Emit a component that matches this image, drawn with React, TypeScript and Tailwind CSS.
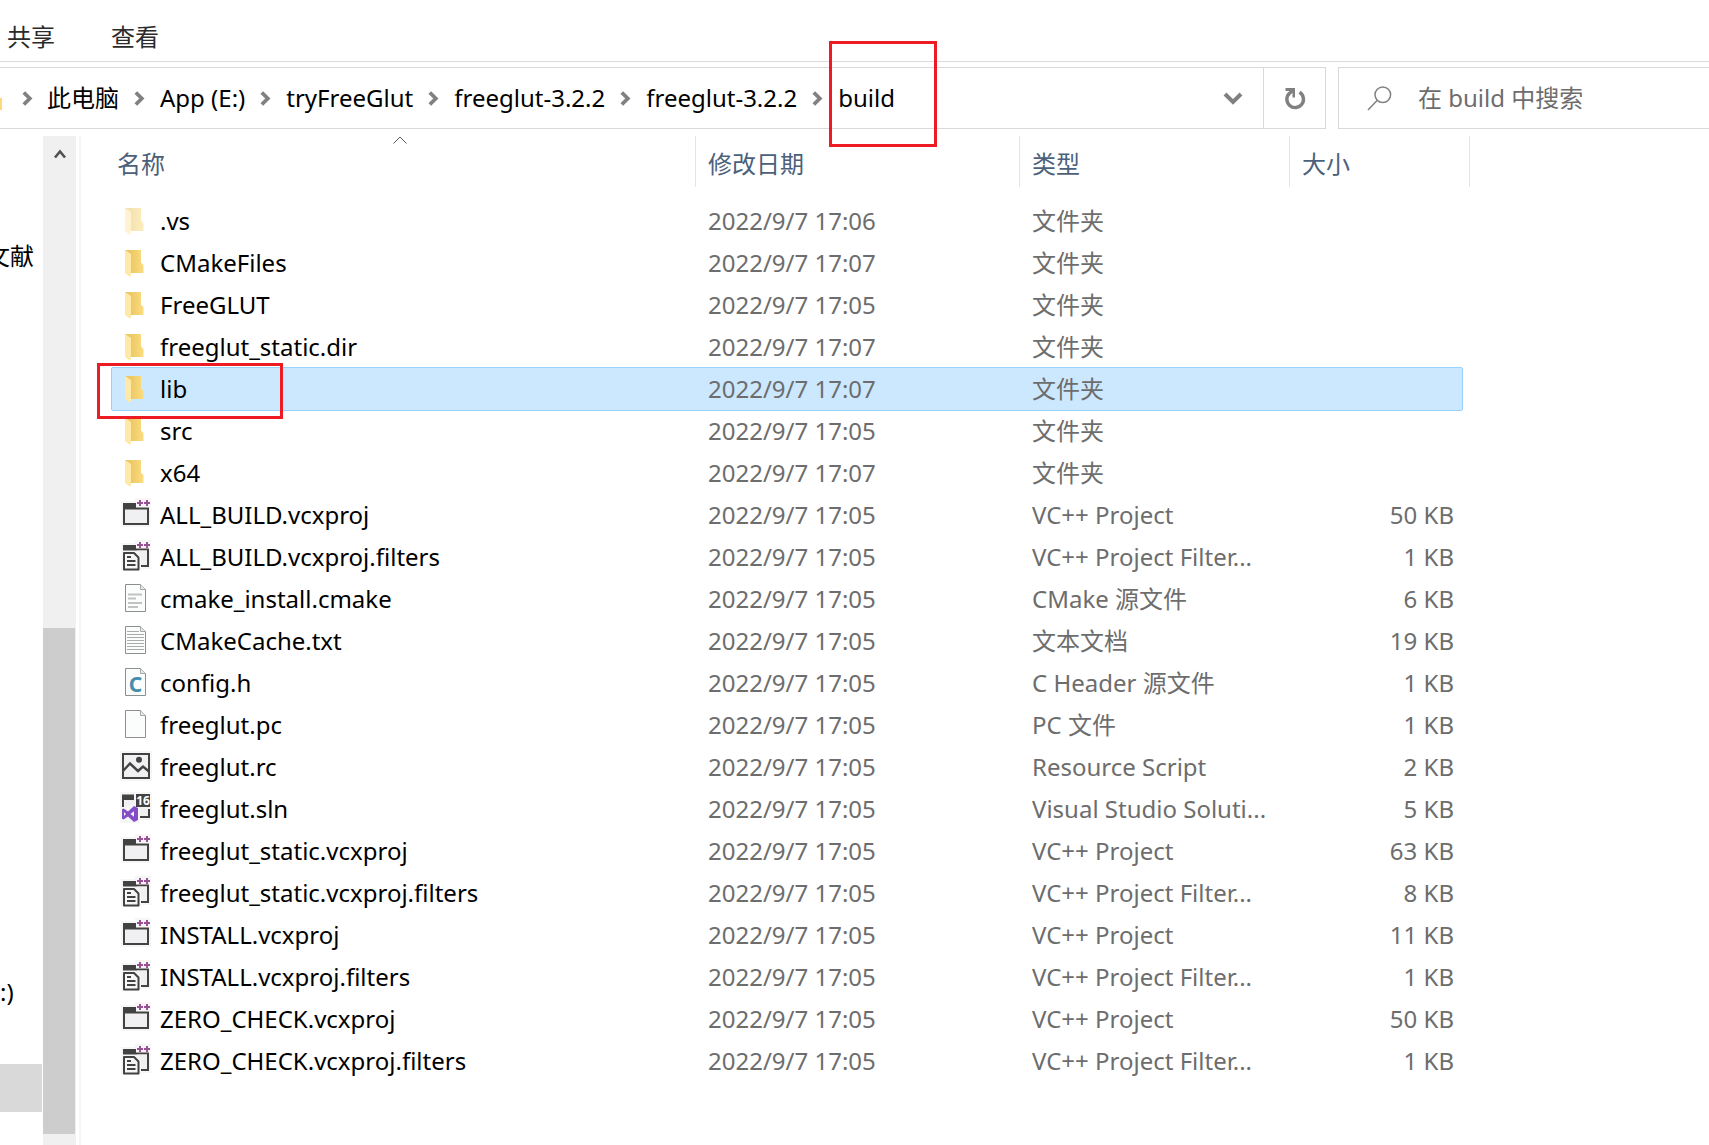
import React from "react";

type IconKind =
  | "folder"
  | "hidden"
  | "project"
  | "filters"
  | "source"
  | "text"
  | "header"
  | "blank"
  | "image"
  | "solution";

type Entry = {
  icon: IconKind;
  name: string;
  date: string;
  type: string;
  size?: string;
  selected?: boolean;
};

const entries: Entry[] = [
  { icon: "hidden", name: ".vs", date: "2022/9/7 17:06", type: "文件夹" },
  { icon: "folder", name: "CMakeFiles", date: "2022/9/7 17:07", type: "文件夹" },
  { icon: "folder", name: "FreeGLUT", date: "2022/9/7 17:05", type: "文件夹" },
  { icon: "folder", name: "freeglut_static.dir", date: "2022/9/7 17:07", type: "文件夹" },
  { icon: "folder", name: "lib", date: "2022/9/7 17:07", type: "文件夹", selected: true },
  { icon: "folder", name: "src", date: "2022/9/7 17:05", type: "文件夹" },
  { icon: "folder", name: "x64", date: "2022/9/7 17:07", type: "文件夹" },
  { icon: "project", name: "ALL_BUILD.vcxproj", date: "2022/9/7 17:05", type: "VC++ Project", size: "50 KB" },
  { icon: "filters", name: "ALL_BUILD.vcxproj.filters", date: "2022/9/7 17:05", type: "VC++ Project Filter...", size: "1 KB" },
  { icon: "source", name: "cmake_install.cmake", date: "2022/9/7 17:05", type: "CMake 源文件", size: "6 KB" },
  { icon: "text", name: "CMakeCache.txt", date: "2022/9/7 17:05", type: "文本文档", size: "19 KB" },
  { icon: "header", name: "config.h", date: "2022/9/7 17:05", type: "C Header 源文件", size: "1 KB" },
  { icon: "blank", name: "freeglut.pc", date: "2022/9/7 17:05", type: "PC 文件", size: "1 KB" },
  { icon: "image", name: "freeglut.rc", date: "2022/9/7 17:05", type: "Resource Script", size: "2 KB" },
  { icon: "solution", name: "freeglut.sln", date: "2022/9/7 17:05", type: "Visual Studio Soluti...", size: "5 KB" },
  { icon: "project", name: "freeglut_static.vcxproj", date: "2022/9/7 17:05", type: "VC++ Project", size: "63 KB" },
  { icon: "filters", name: "freeglut_static.vcxproj.filters", date: "2022/9/7 17:05", type: "VC++ Project Filter...", size: "8 KB" },
  { icon: "project", name: "INSTALL.vcxproj", date: "2022/9/7 17:05", type: "VC++ Project", size: "11 KB" },
  { icon: "filters", name: "INSTALL.vcxproj.filters", date: "2022/9/7 17:05", type: "VC++ Project Filter...", size: "1 KB" },
  { icon: "project", name: "ZERO_CHECK.vcxproj", date: "2022/9/7 17:05", type: "VC++ Project", size: "50 KB" },
  { icon: "filters", name: "ZERO_CHECK.vcxproj.filters", date: "2022/9/7 17:05", type: "VC++ Project Filter...", size: "1 KB" },
];

const crumbs = ["此电脑", "App (E:)", "tryFreeGlut", "freeglut-3.2.2", "freeglut-3.2.2", "build"];

function Folder() {
  return (
    <>
      <defs>
        <linearGradient id="folderBack" x1="0" x2="1" y1="0" y2="0">
          <stop offset="0.3" stopColor="#ecc765" />
          <stop offset="1" stopColor="#fbdd80" />
        </linearGradient>
      </defs>
      <path d="M5 5H21V17.5L23.5 20V28H5Z" fill="url(#folderBack)" />
      <path d="M5 5L11 9V29.5L10 32L5 28Z" fill="#ffe9a6" />
    </>
  );
}

function Pluses() {
  return (
    <path d="M17 6H23M20 3V9M24 6H30M27 3V9" stroke="#9b4f96" strokeWidth="2" fill="none" />
  );
}

function Page({ children }: { children?: React.ReactNode }) {
  return (
    <>
      <path d="M5.5 3.5H20.5L25.5 8.5V30.5H5.5Z" fill="#fbfcfc" stroke="#8c8f8f" />
      <path d="M20.5 3.5V8.5H25.5" fill="#e6e8e8" stroke="#a6a8a8" />
      {children}
    </>
  );
}

function FileIcon({ kind }: { kind: IconKind }) {
  return (
    <svg
      aria-hidden="true"
      viewBox="0 0 32 32"
      className={kind === "hidden" ? "mb-1 size-8 shrink-0 opacity-50" : "mb-1 size-8 shrink-0"}
    >
      {(kind === "folder" || kind === "hidden") && <Folder />}
      {kind === "project" && (
        <>
          <path d="M1 4H15V1H31V30H1Z" fill="#f6f6f6" />
          <path d="M3 6H16V10.5H29V28H3Z" fill="#424242" />
          <path d="M5 12.5H27V26H5Z" fill="#f0eff1" />
          <Pluses />
        </>
      )}
      {kind === "filters" && (
        <>
          <path d="M1 4H15V1H31V30H21V32H1Z" fill="#f6f6f6" />
          <path d="M3 6H16V9.5H29V28H21V26H27V11.5H3Z" fill="#424242" />
          <path d="M17 11.5H27V26H21V17Z" fill="#f0eff1" />
          <path d="M4 14H14L18.5 18.5V30.5H4Z" fill="#f6f6f6" stroke="#424242" strokeWidth="2" strokeLinejoin="round" />
          <path d="M7 18H11M7 22H15.5M7 26H15.5" stroke="#424242" strokeWidth="1.8" />
          <Pluses />
        </>
      )}
      {kind === "source" && (
        <Page>
          <path d="M8 13.5H22M8 17.5H16M8 22H22M8 26H18" stroke="#c2c2c2" strokeWidth="1.8" />
        </Page>
      )}
      {kind === "text" && (
        <Page>
          <path
            d="M7 8.5H19M7 11.5H24M7 14.5H24M7 17.5H24M7 20.5H24M7 23.5H24M7 26.5H24"
            stroke="#a9abab"
          />
        </Page>
      )}
      {kind === "header" && (
        <Page>
          <text x="15.5" y="27" textAnchor="middle" fontSize="21" fontWeight="700" fill="#478dab">
            C
          </text>
        </Page>
      )}
      {kind === "blank" && <Page />}
      {kind === "image" && (
        <>
          <path d="M0 2H32V32H0Z" fill="#f6f6f6" />
          <path d="M3 5H29V29H3Z" fill="#f0eff1" stroke="#424242" strokeWidth="2" />
          <circle cx="19" cy="10.7" r="3" fill="#424242" />
          <path d="M3 22L10 14.5L18 22L23 17.5L29 22.5" fill="none" stroke="#424242" strokeWidth="2.4" />
        </>
      )}
      {kind === "solution" && (
        <>
          <path d="M0 1H32V29H20V32H0Z" fill="#f6f6f6" />
          <path d="M2 3.5H14V9H4V16H2Z" fill="#424242" />
          <path d="M5 9H14V16H28V25H20V17L11 13L5 16Z" fill="#f0eff1" />
          <path d="M16 3H30V16H16Z" fill="#424242" />
          <path d="M28 18H30V27H20V25H28Z" fill="#424242" />
          <text x="23" y="14" textAnchor="middle" fontSize="12" fontWeight="700" fill="#ffffff">
            16
          </text>
          <path
            transform="translate(0.4 13.4) scale(0.8)"
            fillRule="evenodd"
            d="M17 2L22 4.5V19.5L17 22L9.5 15L4 19L2 18V6L4 5L9.5 9ZM17 8.5L12.5 12L17 15.5ZM4.5 9.5V14.5L7 12Z"
            fill="#854cc7"
          />
        </>
      )}
    </svg>
  );
}

function Crumbs() {
  return (
    <nav aria-label="地址" className="flex items-center">
      <span className="mb-1 h-3 w-[2px] self-end bg-[#ffd978]" />
      {crumbs.map((crumb, i) => (
        <React.Fragment key={i}>
          <svg
            aria-hidden="true"
            viewBox="0 0 11 15"
            className={i === 0 ? "mr-[14px] ml-5 w-[11px]" : "mx-[15px] w-[11px]"}
          >
            <path d="M1.8 1.5L7.8 7.5L1.8 13.5" fill="none" stroke="#808080" strokeWidth="3.8" />
          </svg>
          <a href="#" className="relative text-black">
            {crumb}
            {i === crumbs.length - 1 && (
              <span className="pointer-events-none absolute -top-[41px] -left-[9px] h-[106px] w-[108px] border-3 border-[#ed1c24]" />
            )}
          </a>
        </React.Fragment>
      ))}
    </nav>
  );
}

function Row({ entry }: { entry: Entry }) {
  const on = entry.selected;
  const mid = on
    ? "bg-[#cce8ff] pl-3 shadow-[0_-1px_0_#99d1ff,0_1px_0_#99d1ff]"
    : "pl-3";
  return (
    <tr className="h-[42px] text-[#6d6d6d]">
      <td />
      <td
        className={
          on
            ? "bg-[#cce8ff] pl-2 shadow-[0_-1px_0_#99d1ff,0_1px_0_#99d1ff,-1px_0_0_#99d1ff]"
            : "pl-2"
        }
      >
        <div className="relative flex items-center gap-2 text-black">
          <FileIcon kind={entry.icon} />
          <span>{entry.name}</span>
          {on && (
            <span className="pointer-events-none absolute -top-[8px] -left-[23px] z-10 h-14 w-[186px] border-3 border-[#ed1c24]" />
          )}
        </div>
      </td>
      <td className={mid}>{entry.date}</td>
      <td className={mid}>{entry.type}</td>
      <td
        className={
          on
            ? "bg-[#cce8ff] pr-2 text-right shadow-[0_-1px_0_#99d1ff,0_1px_0_#99d1ff,1px_0_0_#99d1ff]"
            : "pr-2 text-right"
        }
      >
        {entry.size}
      </td>
    </tr>
  );
}

export default function App() {
  return (
    <div className="flex min-h-screen flex-col overflow-hidden bg-white font-['Noto_Sans','Noto_Sans_CJK_SC',sans-serif] text-[24px] leading-8 whitespace-nowrap">
      <header className="flex h-[62px] items-center gap-14 border-b border-[#dadbdc] px-[7px] pt-3 text-[#2b2b2b]">
        <button type="button">共享</button>
        <button type="button">查看</button>
      </header>

      <div className="mt-[5px] mb-[7px] flex h-[62px] gap-3">
        <div className="flex min-w-0 flex-1 border-y border-r border-[#d9d9d9]">
          <div className="flex min-w-0 flex-1 items-center">
            <Crumbs />
          </div>
          <button type="button" aria-label="以前的位置" className="px-5">
            <svg aria-hidden="true" viewBox="0 0 20 13" className="w-5">
              <path d="M2 2L10 10L18 2" fill="none" stroke="#808080" strokeWidth="4" />
            </svg>
          </button>
          <button
            type="button"
            aria-label="刷新"
            className="flex w-[62px] items-center justify-center border-l border-[#d9d9d9]"
          >
            <svg aria-hidden="true" viewBox="0 0 22 23" className="w-[22px]">
              <path
                d="M15.5 5.2A8.3 8.3 0 1 1 5.5 6.2L9 3.5"
                fill="none"
                stroke="#808080"
                strokeWidth="3.4"
              />
              <path d="M1.5 1H11V10.5H8.5V4H1.5Z" fill="#808080" />
            </svg>
          </button>
        </div>
        <label className="flex w-[371px] items-center gap-[26px] border-y border-l border-[#d9d9d9] pl-7">
          <svg aria-hidden="true" viewBox="0 0 25 25" className="w-[25px] shrink-0">
            <circle cx="15.8" cy="8.8" r="7.8" fill="none" stroke="#808080" strokeWidth="1.5" />
            <path d="M10.3 14.3L1 24" stroke="#808080" strokeWidth="1.5" />
          </svg>
          <input
            type="search"
            aria-label="搜索"
            placeholder="在 build 中搜索"
            className="min-w-0 flex-1 outline-none placeholder:text-[#6d6d6d]"
          />
        </label>
      </div>

      <main className="flex flex-1">
        <aside className="flex w-[43px] flex-col overflow-hidden pr-px text-black">
          <a href="#" className="mt-24 flex h-12 items-center justify-end pr-2">
            文献
          </a>
          <a href="#" className="mt-[688px] flex h-12 items-center">
            :)
          </a>
          <div className="mt-12 h-12 bg-[#d9d9d9]" />
        </aside>

        <div className="flex w-[33px] flex-col bg-[#f0f0f0] pb-[11px]">
          <button type="button" aria-label="向上滚动" className="flex h-9 items-center justify-center">
            <svg aria-hidden="true" viewBox="0 0 12 10" className="w-3">
              <path d="M1 8.5L6 2.5L11 8.5" fill="none" stroke="#505050" strokeWidth="2.6" />
            </svg>
          </button>
          <div className="mt-[456px] mr-px flex-1 bg-[#cdcdcd]" />
        </div>
        <div className="ml-[3px] w-[2px] bg-[#f5f5f5]" />

        <section className="min-w-0 flex-1 pl-6">
          <table className="w-full table-fixed border-separate border-spacing-0">
            <colgroup>
              <col className="w-[7px]" />
              <col className="w-[584px]" />
              <col className="w-[324px]" />
              <col className="w-[270px]" />
              <col className="w-[172px]" />
              <col className="w-2" />
              <col />
            </colgroup>
            <thead>
              <tr className="h-[51px] text-left text-[#4c607a]">
                <th colSpan={2} className="relative border-r border-[#e5e5e5] pt-1 pl-3 font-normal">
                  名称
                  <svg
                    aria-hidden="true"
                    viewBox="0 0 14 8"
                    className="absolute top-0 left-1/2 w-[14px] -translate-x-1/2"
                  >
                    <path d="M0.5 7.5L7 1L13.5 7.5" fill="none" stroke="#5a5a5a" />
                  </svg>
                </th>
                <th className="border-r border-[#e5e5e5] pt-1 pl-3 font-normal">修改日期</th>
                <th className="border-r border-[#e5e5e5] pt-1 pl-3 font-normal">类型</th>
                <th colSpan={2} className="border-r border-[#e5e5e5] pt-1 pl-3 font-normal">
                  大小
                </th>
                <th aria-hidden="true" />
              </tr>
            </thead>
            <tbody>
              <tr aria-hidden="true" className="h-[13px]" />
              {entries.map((entry) => (
                <Row key={entry.name} entry={entry} />
              ))}
            </tbody>
          </table>
        </section>
      </main>
    </div>
  );
}
